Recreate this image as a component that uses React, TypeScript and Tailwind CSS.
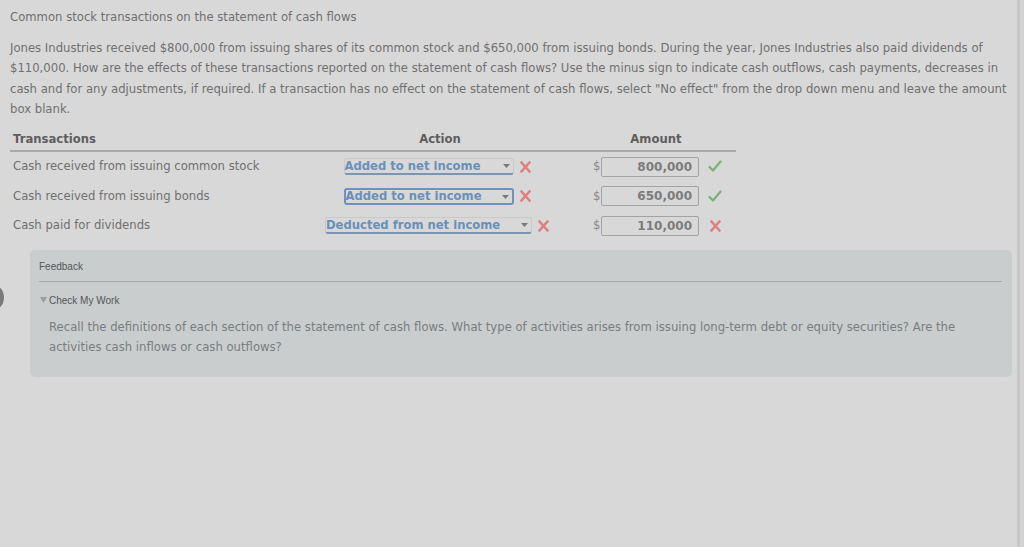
import React from "react";

const Cross = ({ className = "" }: { className?: string }) => (
  <svg width="11" height="12" viewBox="0 0 11 12" className={className}>
    <path d="M1.5 1.5 L9.5 10.5 M9.5 1.5 L1.5 10.5" stroke="#df7f7f" strokeWidth="2.5" strokeLinecap="square" />
  </svg>
);

const Check = () => (
  <svg width="14" height="13" viewBox="0 0 14 13">
    <path d="M1.5 7 L5 10.5 L12.5 1.5" stroke="#79b179" strokeWidth="2.2" fill="none" strokeLinecap="round" strokeLinejoin="round" />
  </svg>
);

const Select = ({ label, w, focus }: { label: string; w: string; focus?: boolean }) => (
  <div
    className={`relative flex h-[17px] items-center rounded-[3px] ${
      focus ? "border-2 border-[#7190c0]" : "border border-b-2 border-[#c9c9c9] border-b-[#7d95b3]"
    } ${w}`}
  >
    <span className="pl-[0px] text-[11.6px] font-bold leading-none text-[#6a90ba]">{label}</span>
    <svg width="7" height="5" viewBox="0 0 7 5" className="absolute right-[3px] top-[5px]">
      <path d="M0 0 L7 0 L3.5 4 Z" fill="#7a7a7a" />
    </svg>
  </div>
);

const Amount = ({ v, ok }: { v: string; ok: boolean }) => (
  <div className="flex items-center">
    <span className="w-[8px] text-[11.65px] text-[#8a8a8a]">$</span>
    <div className="flex h-[20px] w-[98px] items-center justify-end rounded-[2px] border border-[#a3a3a3] pr-[6px] text-[12px] font-bold text-[#7c7c7c]">
      {v}
    </div>
    <div className="ml-[8px] flex w-[16px] justify-center">{ok ? <Check /> : <Cross />}</div>
  </div>
);

export default function App() {
  const rows = [
    { t: "Cash received from issuing common stock", a: "Added to net income", w: "w-[170px]", v: "800,000", ok: true, focus: false },
    { t: "Cash received from issuing bonds", a: "Added to net income", w: "w-[170px]", v: "650,000", ok: true, focus: true },
    { t: "Cash paid for dividends", a: "Deducted from net income", w: "w-[207px]", v: "110,000", ok: false, focus: false },
  ];
  return (
    <div
      className="relative h-[547px] w-[1024px] overflow-hidden bg-[#d8d8d8] text-[#707070]"
      style={{ fontFamily: '"DejaVu Sans", Verdana, sans-serif' }}
    >
      <div className="absolute right-0 top-0 flex h-full">
        <div className="w-[3px] bg-[#c8c8c8]" />
        <div className="w-[4px] bg-[#d2d2d2]" />
      </div>
      <div className="absolute left-[-25px] top-[283px] h-[29px] w-[29px] rounded-full bg-[#7a7a7a]" />

      <div className="pl-[10px] pr-[10px] pt-[9px]">
        <div className="text-[11.65px] leading-[16px]">Common stock transactions on the statement of cash flows</div>
        <p className="mt-[13px] w-[1004px] text-[11.65px] leading-[20.3px]">
          Jones Industries received $800,000 from issuing shares of its common stock and $650,000 from issuing bonds. During the year, Jones Industries also paid dividends of $110,000. How are the effects of these transactions reported on the statement of cash flows? Use the minus sign to indicate cash outflows, cash payments, decreases in cash and for any adjustments, if required. If a transaction has no effect on the statement of cash flows, select "No effect" from the drop down menu and leave the amount box blank.
        </p>

        <div className="mt-[10px] w-[726px]">
          <div className="flex h-[23px] items-center border-b-2 border-[#a9a9a9] text-[11.65px] font-bold text-[#5e5e5e]">
            <div className="w-[294px] pl-[3px]">Transactions</div>
            <div className="w-[272px] text-center">Action</div>
            <div className="w-[160px] text-center">Amount</div>
          </div>
          <div>
            {rows.map((r, i) => (
              <div key={i} className="flex h-[29.5px] items-center text-[11.65px]">
                <div className="w-[294px] pl-[3px]">{r.t}</div>
                <div className="flex w-[272px] items-center justify-center gap-[6px] pr-[6px]">
                  <Select label={r.a} w={r.w} focus={r.focus} />
                  <Cross />
                </div>
                <div className="flex w-[160px] justify-center pl-[4px]">
                  <Amount v={r.v} ok={r.ok} />
                </div>
              </div>
            ))}
          </div>
        </div>
      </div>

      <div className="ml-[30px] mt-[9px] h-[127px] w-[982px] rounded-[5px] bg-[#c9cdce] px-[9px] pt-[9px]">
        <div className="text-[10px] text-[#555]" style={{ fontFamily: '"Liberation Sans", Arial, sans-serif' }}>
          Feedback
        </div>
        <div className="mt-[7px] h-[1px] w-[963px] bg-[#a6aaab]" />
        <div className="mt-[11px] flex items-center text-[10px] text-[#555]" style={{ fontFamily: '"Liberation Sans", Arial, sans-serif' }}>
          <svg width="7" height="6" viewBox="0 0 7 6" className="ml-[1px] mr-[2px]">
            <path d="M0 0 L7 0 L3.5 6 Z" fill="#9a9ea0" />
          </svg>
          Check My Work
        </div>
        <p className="mt-[9px] pl-[10px] text-[11.65px] leading-[20.3px] text-[#7a7d7e]">
          Recall the definitions of each section of the statement of cash flows. What type of activities arises from issuing long-term debt or equity securities? Are the
          <br />
          activities cash inflows or cash outflows?
        </p>
      </div>
    </div>
  );
}
